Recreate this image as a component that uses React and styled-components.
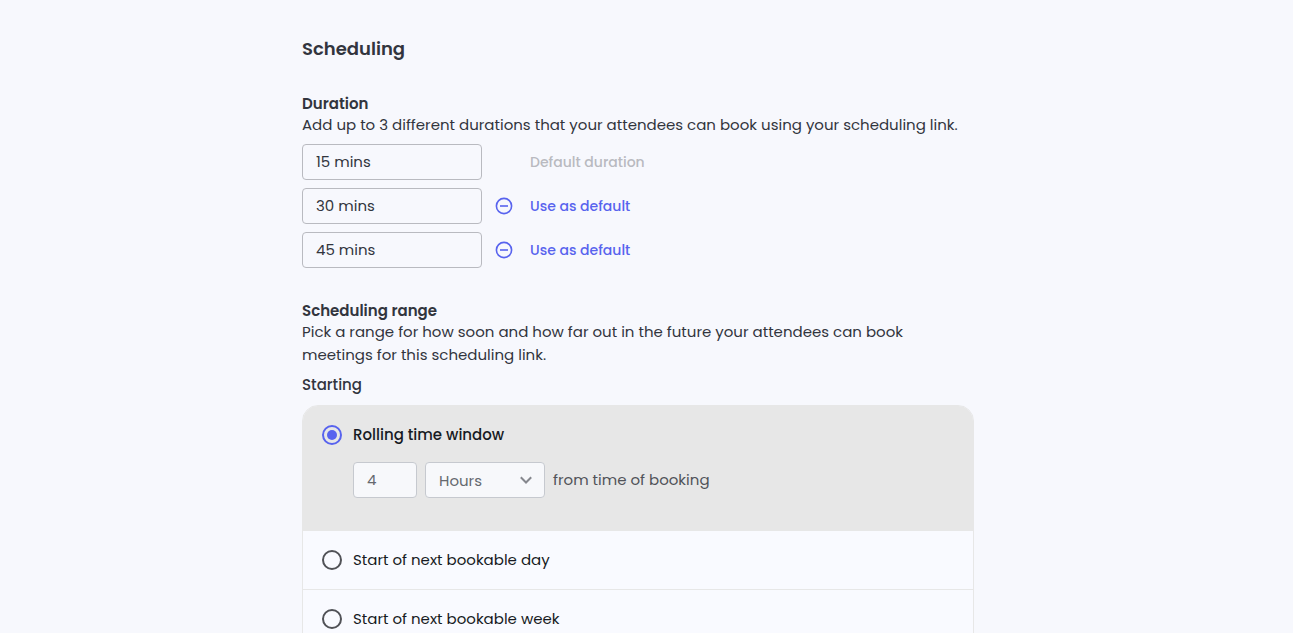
import React, { useState } from "react";
import styled, { createGlobalStyle } from "styled-components";

const GlobalStyle = createGlobalStyle`
  *, *::before, *::after { box-sizing: border-box; }
  body {
    margin: 0;
    background: #f7f8fd;
    color: #32353e;
    font-family: Poppins, Inter, "Liberation Sans", sans-serif;
    font-size: 15px;
    line-height: 23px;
  }
  button, input, select { font: inherit; }
`;

const Page = styled.div`
  padding: 35px 17px 40px 0;
`;

const Column = styled.main`
  max-width: 672px;
  margin: 0 auto;
`;

const Title = styled.h1`
  margin: 0 0 32px;
  font-size: 18px;
  line-height: 28px;
  font-weight: 600;
`;

const Section = styled.section`
  margin-bottom: 34px;
`;

const SectionTitle = styled.h2`
  margin: 0;
  font-size: 15px;
  line-height: 18px;
  font-weight: 600;
`;

const Description = styled.p`
  margin: 0 0 8px;
`;

const DurationList = styled.div`
  display: grid;
  grid-template-columns: 180px 20px 1fr;
  align-items: center;
  row-gap: 8px;
`;

const TextInput = styled.input`
  width: ${({ $width }) => $width};
  height: 36px;
  padding: 0 13px 2px;
  border: 1px solid ${({ $muted }) => ($muted ? "#c6c9cf" : "#b9bac0")};
  border-radius: 4px;
  background: ${({ $muted }) => ($muted ? "#f7f8fb" : "transparent")};
  color: ${({ $muted }) => ($muted ? "#66696f" : "#32353e")};
`;

const DurationRow = styled.div`
  display: contents;
`;

const RemoveButton = styled.button`
  grid-column: 2;
  width: 20px;
  height: 20px;
  margin-left: 12px;
  padding: 0;
  border: 0;
  background: none;
  color: #5863ee;
  cursor: pointer;
  svg { display: block; }
`;

const DefaultButton = styled.button`
  grid-column: 3;
  justify-self: start;
  margin-left: 28px;
  padding: 0;
  border: 0;
  background: none;
  color: #5863ee;
  font-size: 14px;
  line-height: 20px;
  font-weight: 500;
  cursor: pointer;
  &:disabled { color: #b9bac0; cursor: default; }
`;

const Options = styled.fieldset`
  margin: 0;
  padding: 0;
  border: 0;
  min-width: 0;
`;

const Legend = styled.legend`
  padding: 0;
  margin-bottom: 9px;
  line-height: 22px;
  font-weight: 500;
`;

const Card = styled.div`
  border: 1px solid #e7e7e7;
  border-radius: 16px;
  background: #f9faff;
  overflow: hidden;
`;

const Option = styled.div`
  padding: ${({ $active }) => ($active ? "17px 19px 32px" : "17px 19px 18px")};
  background: ${({ $active }) => ($active ? "#e7e7e7" : "transparent")};
  & + & { border-top: 1px solid #e7e7e7; }
`;

const OptionLabel = styled.label`
  display: flex;
  align-items: center;
  gap: 11px;
  color: #171a23;
  font-weight: ${({ $active }) => ($active ? 500 : 400)};
  cursor: pointer;
`;

const Radio = styled.input`
  appearance: none;
  flex: none;
  display: grid;
  place-items: center;
  width: 20px;
  height: 20px;
  margin: 0;
  border: 2px solid #515257;
  border-radius: 50%;
  &:checked { border-color: #5863ee; }
  &:checked::before {
    content: "";
    width: 10px;
    height: 10px;
    border-radius: 50%;
    background: #5863ee;
  }
`;

const WindowFields = styled.div`
  display: flex;
  align-items: center;
  gap: 8px;
  margin: 16px 0 0 31px;
  color: #515359;
`;

const SelectBox = styled.div`
  display: grid;
  grid-template-columns: 1fr 26px;
  align-items: center;
  width: 120px;
  svg { grid-area: 1 / 2; pointer-events: none; color: #85878d; }
`;

const Select = styled.select`
  grid-area: 1 / 1 / 2 / 3;
  appearance: none;
  width: 100%;
  height: 36px;
  padding: 0 13px;
  border: 1px solid #c6c9cf;
  border-radius: 4px;
  background: #f7f8fb;
  color: #66696f;
`;

const FieldNote = styled.span`
  padding-bottom: 2px;
`;

const MinusCircle = () => (
  <svg width="20" height="20" viewBox="0 0 20 20" fill="none" stroke="currentColor" strokeWidth="1.6" aria-hidden="true">
    <circle cx="10" cy="10" r="7.6" />
    <path d="M6 10h8" />
  </svg>
);

const Chevron = () => (
  <svg width="14" height="10" viewBox="0 0 14 10" fill="none" stroke="currentColor" strokeWidth="2" aria-hidden="true">
    <path d="M1.8 2.3 7 7.5l5.2-5.2" />
  </svg>
);

const initialDurations = ["15 mins", "30 mins", "45 mins"];

const choices = [
  { id: "rolling", label: "Rolling time window" },
  { id: "day", label: "Start of next bookable day" },
  { id: "week", label: "Start of next bookable week" },
];

export default function App() {
  const [durations, setDurations] = useState(initialDurations);
  const [preferred, setPreferred] = useState("15 mins");
  const [start, setStart] = useState("rolling");

  return (
    <Page>
      <GlobalStyle />
      <Column>
        <Title>Scheduling</Title>
        <Section>
          <SectionTitle>Duration</SectionTitle>
          <Description>
            Add up to 3 different durations that your attendees can book using your scheduling link.
          </Description>
          <DurationList>
            {durations.map((d) => (
              <DurationRow key={d}>
                <TextInput $width="100%" defaultValue={d} aria-label={`Duration ${d}`} />
                {d !== preferred && (
                  <RemoveButton
                    type="button"
                    aria-label={`Remove ${d}`}
                    onClick={() => setDurations(durations.filter((x) => x !== d))}
                  >
                    <MinusCircle />
                  </RemoveButton>
                )}
                <DefaultButton type="button" disabled={d === preferred} onClick={() => setPreferred(d)}>
                  {d === preferred ? "Default duration" : "Use as default"}
                </DefaultButton>
              </DurationRow>
            ))}
          </DurationList>
        </Section>
        <Section>
          <SectionTitle>Scheduling range</SectionTitle>
          <Description>
            Pick a range for how soon and how far out in the future your attendees can book meetings for
            this scheduling link.
          </Description>
          <Options>
            <Legend>Starting</Legend>
            <Card>
              {choices.map(({ id, label }) => {
                const active = start === id;
                return (
                  <Option key={id} $active={active}>
                    <OptionLabel $active={active}>
                      <Radio type="radio" name="start" checked={active} onChange={() => setStart(id)} />
                      {label}
                    </OptionLabel>
                    {active && id === "rolling" && (
                      <WindowFields>
                        <TextInput $width="64px" $muted defaultValue="4" aria-label="Amount" />
                        <SelectBox>
                          <Select defaultValue="Hours" aria-label="Unit">
                            <option>Hours</option>
                            <option>Days</option>
                          </Select>
                          <Chevron />
                        </SelectBox>
                        <FieldNote>from time of booking</FieldNote>
                      </WindowFields>
                    )}
                  </Option>
                );
              })}
            </Card>
          </Options>
        </Section>
      </Column>
    </Page>
  );
}
